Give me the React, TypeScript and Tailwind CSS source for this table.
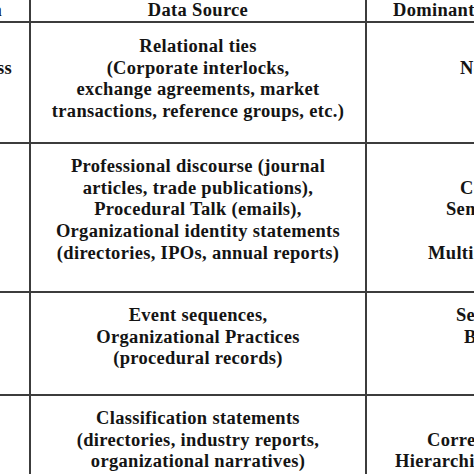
import React from 'react'

const font =
  "font-['Liberation_Serif','Times_New_Roman',serif] font-bold text-[18.5px] tracking-[0.32px] leading-[21.7px] text-[#141414]"

type Line = { text: string; ml: number }

function EdgeCell({ lines, pad }: { lines: (Line | null)[]; pad: string }) {
  return (
    <div className={`overflow-hidden ${pad}`}>
      {lines.map((l, i) =>
        l ? (
          <div key={i} className="whitespace-nowrap" style={{ marginLeft: l.ml }}>
            {l.text}
          </div>
        ) : (
          <div key={i} className="h-[21.7px]" />
        ),
      )}
    </div>
  )
}

function LeftCell({ lines, pad }: { lines: ({ text: string; pr: number } | null)[]; pad: string }) {
  return (
    <div className={`overflow-hidden border-r-2 border-[#3c3c3c] ${pad}`}>
      {lines.map((l, i) =>
        l ? (
          <div key={i} className="flex justify-end whitespace-nowrap" style={{ paddingRight: l.pr }}>
            {l.text}
          </div>
        ) : (
          <div key={i} className="h-[21.7px]" />
        ),
      )}
    </div>
  )
}

const rows = [
  {
    h: 'h-[121px]',
    pad: 'pt-[13px]',
    left: [null, { text: 'Process', pr: 17 }],
    source: [
      'Relational ties',
      '(Corporate interlocks,',
      'exchange agreements, market',
      'transactions, reference groups, etc.)',
    ],
    right: [null, { text: 'Network Analysis', ml: 93 }],
  },
  {
    h: 'h-[149px]',
    pad: 'pt-[12px]',
    left: [],
    source: [
      'Professional discourse (journal',
      'articles, trade publications),',
      'Procedural Talk (emails),',
      'Organizational identity statements',
      '(directories, IPOs, annual reports)',
    ],
    right: [
      null,
      { text: 'Content Analysis,', ml: 93 },
      { text: 'Semantic Network', ml: 79 },
      null,
      { text: 'Multidimensional', ml: 61 },
    ],
  },
  {
    h: 'h-[103px]',
    pad: 'pt-[12px]',
    left: [],
    source: ['Event sequences,', 'Organizational Practices', '(procedural records)'],
    right: [
      { text: 'Sequence Analysis,', ml: 89 },
      { text: 'Blockmodeling', ml: 97 },
    ],
  },
  {
    h: 'h-[100px]',
    pad: 'pt-[12px]',
    left: [],
    source: [
      'Classification statements',
      '(directories, industry reports,',
      'organizational narratives)',
    ],
    right: [
      null,
      { text: 'Correspondence', ml: 60 },
      { text: 'Hierarchical Clustering', ml: 28 },
    ],
  },
]

export default function App() {
  return (
    <div className={`w-[474px] h-[474px] overflow-hidden bg-white ${font}`}>
      {/* Header */}
      <div className="grid grid-cols-[31px_336px_1fr] h-[23px] border-b-2 border-[#3c3c3c]">
        <LeftCell lines={[{ text: 'Dimension', pr: 27 }]} pad="pt-0" />
        <div className="border-r-2 border-[#3c3c3c] text-center">Data Source</div>
        <EdgeCell lines={[{ text: 'Dominant Method', ml: 26 }]} pad="pt-0" />
      </div>

      {rows.map((r, i) => (
        <div
          key={i}
          className={`grid grid-cols-[31px_336px_1fr] ${r.h} ${i < rows.length - 1 ? 'border-b-2 border-[#3c3c3c]' : ''}`}
        >
          <LeftCell lines={r.left} pad={r.pad} />
          <div className={`border-r-2 border-[#3c3c3c] text-center ${r.pad}`}>
            {r.source.map((s, j) => (
              <div key={j} className="whitespace-nowrap">
                {s}
              </div>
            ))}
          </div>
          <EdgeCell lines={r.right} pad={r.pad} />
        </div>
      ))}
    </div>
  )
}
